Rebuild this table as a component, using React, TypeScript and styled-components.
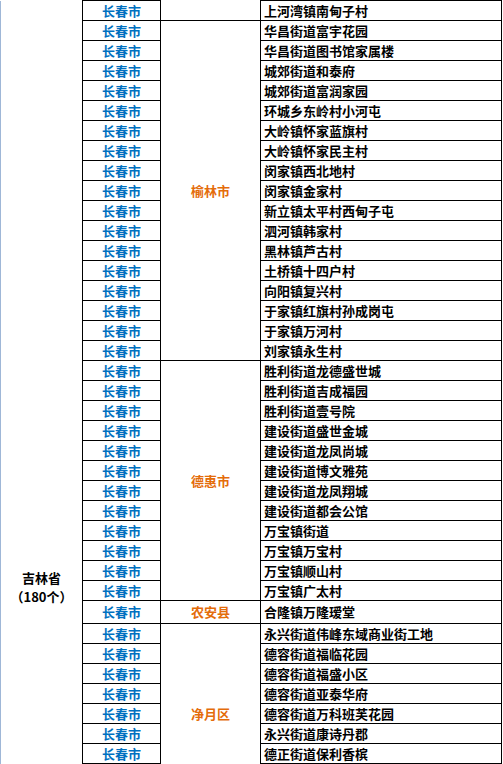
import { Fragment } from 'react';
import styled, { createGlobalStyle } from 'styled-components';

interface DistrictGroup {
  district: string;
  places: string[];
  // rows of the group that lie below the visible part of the sheet
  hiddenRows?: number;
  // group started above the visible part, so no top rule
  continued?: boolean;
  tall?: boolean;
}

const groups: DistrictGroup[] = [
  { district: '', places: ['上河湾镇南甸子村'], continued: true },
  {
    district: '榆林市',
    places: [
      '华昌街道富宇花园',
      '华昌街道图书馆家属楼',
      '城郊街道和泰府',
      '城郊街道富润家园',
      '环城乡东岭村小河屯',
      '大岭镇怀家蓝旗村',
      '大岭镇怀家民主村',
      '闵家镇西北地村',
      '闵家镇金家村',
      '新立镇太平村西甸子屯',
      '泗河镇韩家村',
      '黑林镇芦古村',
      '土桥镇十四户村',
      '向阳镇复兴村',
      '于家镇红旗村孙成岗屯',
      '于家镇万河村',
      '刘家镇永生村',
    ],
  },
  {
    district: '德惠市',
    places: [
      '胜利街道龙德盛世城',
      '胜利街道吉成福园',
      '胜利街道壹号院',
      '建设街道盛世金城',
      '建设街道龙凤尚城',
      '建设街道博文雅苑',
      '建设街道龙凤翔城',
      '建设街道都会公馆',
      '万宝镇街道',
      '万宝镇万宝村',
      '万宝镇顺山村',
      '万宝镇广太村',
    ],
  },
  { district: '农安县', places: ['合隆镇万隆瑷堂'], tall: true },
  {
    district: '净月区',
    places: [
      '永兴街道伟峰东域商业街工地',
      '德容街道福临花园',
      '德容街道福盛小区',
      '德容街道亚泰华府',
      '德容街道万科班芙花园',
      '永兴街道康诗丹郡',
      '德正街道保利香槟',
    ],
    hiddenRows: 2,
  },
];

const totalRows = groups.reduce(
  (sum, g) => sum + g.places.length + (g.hiddenRows ?? 0),
  0,
);

export default function App() {
  return (
    <>
      <GlobalStyle />
      <Sheet>
        <Table>
          <colgroup>
            <col style={{ width: 82 }} />
            <col style={{ width: 78 }} />
            <col style={{ width: 100 }} />
            <col />
          </colgroup>
          <tbody>
            {groups.map((group, gi) => {
              const rows = [
                ...group.places,
                ...Array(group.hiddenRows ?? 0).fill(''),
              ];
              return (
                <Fragment key={gi}>
                  {rows.map((place, ri) => (
                    <Row key={ri} $tall={group.tall}>
                      {gi === 0 && ri === 0 && (
                        <ProvinceCell rowSpan={totalRows}>
                          <ProvinceLine>吉林省</ProvinceLine>
                          <ProvinceLine>（180个）</ProvinceLine>
                        </ProvinceCell>
                      )}
                      <CityCell>{place ? '长春市' : ''}</CityCell>
                      {ri === 0 && (
                        <DistrictCell
                          rowSpan={rows.length}
                          $continued={group.continued}
                        >
                          {group.district}
                        </DistrictCell>
                      )}
                      <PlaceCell>{place}</PlaceCell>
                    </Row>
                  ))}
                </Fragment>
              );
            })}
          </tbody>
        </Table>
      </Sheet>
    </>
  );
}

const GlobalStyle = createGlobalStyle`
  html, body {
    margin: 0;
    padding: 0;
    background: #ffffff;
    overflow: hidden;
  }
`;

const Sheet = styled.div`
  width: 503px;
  height: 764px;
  overflow: hidden;
  font-family: 'Noto Sans CJK SC', 'Noto Sans', sans-serif;
  font-weight: 700;
  font-size: 13px;
`;

const Table = styled.table`
  width: 502px;
  border-collapse: collapse;
  table-layout: fixed;
`;

const Row = styled.tr<{ $tall?: boolean }>`
  height: ${({ $tall }) => ($tall ? 23 : 20)}px;
`;

const Cell = styled.td`
  padding: 0;
  line-height: 18px;
  white-space: nowrap;
  overflow: hidden;
  border: 1px solid #000000;
`;

const ProvinceCell = styled(Cell)`
  border-top: none;
  border-bottom: none;
  border-left: 1px solid #9fb7d7;
  vertical-align: top;
  text-align: center;
  padding-top: 567px;
  color: #000000;
`;

const ProvinceLine = styled.div`
  height: 19px;
  line-height: 19px;
`;

const CityCell = styled(Cell)`
  text-align: center;
  color: #0070c0;
`;

const DistrictCell = styled(Cell)<{ $continued?: boolean }>`
  text-align: center;
  color: #e46c0a;
  border-top: ${({ $continued }) => ($continued ? 'none' : '1px solid #000000')};
`;

const PlaceCell = styled(Cell)`
  text-align: left;
  padding-left: 3px;
  color: #000000;
`;
